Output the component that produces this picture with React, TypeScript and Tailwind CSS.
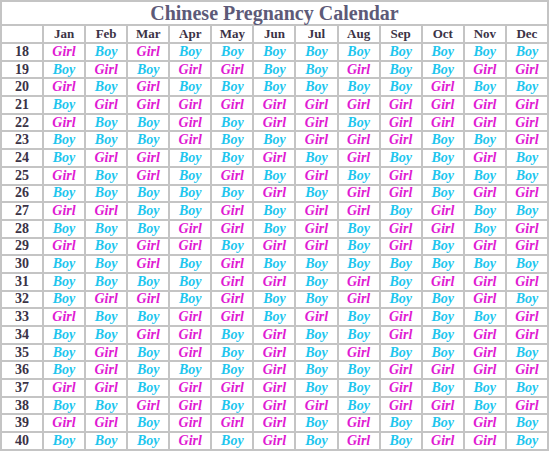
import React from 'react';

const months = ['Jan', 'Feb', 'Mar', 'Apr', 'May', 'Jun', 'Jul', 'Aug', 'Sep', 'Oct', 'Nov', 'Dec'];

// G = Girl, B = Boy, one string per age, Jan..Dec
const chart: [number, string][] = [
  [18, 'GBGBBBBBBBBB'],
  [19, 'BGBGGBBGBBGG'],
  [20, 'GBGBBBBBBGBB'],
  [21, 'BGGGGGGGGGGG'],
  [22, 'GBBGBGGBGGGG'],
  [23, 'BBBGBBGGGBBG'],
  [24, 'BGGBBGBGBBGB'],
  [25, 'GBGBGBGBGBBB'],
  [26, 'BBBBBGBGGBGG'],
  [27, 'GGBBGBGGBGBB'],
  [28, 'BBBGGBGBGGBG'],
  [29, 'GBGGBGGBGBGG'],
  [30, 'BBGBGBBBBBBB'],
  [31, 'BBBBGGBGBGGG'],
  [32, 'BGGBGBBGBBGB'],
  [33, 'GBBGGBGBGBBG'],
  [34, 'BBGGBGBBGBGG'],
  [35, 'BGBGBGBGBBGB'],
  [36, 'BGBBBGBBGGGG'],
  [37, 'GGBGGGBBGBBB'],
  [38, 'BBGGBGGBGGBG'],
  [39, 'GGBGGGBGBBGB'],
  [40, 'BBBGBGBGBGGB'],
];

const App: React.FC = () => {
  return (
    <div className="w-[549px] h-[451px] bg-white overflow-hidden font-['Liberation_Serif',serif]">
      <table className="w-[549px] table-fixed border-collapse border-2 border-[#c4c4c4]">
        <colgroup>
          <col className="w-[42px]" />
          {months.map((m) => (
            <col key={m} />
          ))}
        </colgroup>
        <thead>
          <tr className="h-[24px]">
            <th
              colSpan={13}
              className="border-2 border-[#c4c4c4] p-0 text-center text-[20px] leading-[22px] font-bold text-[#5d5a78]"
            >
              Chinese Pregnancy Calendar
            </th>
          </tr>
          <tr className="h-[18px]">
            <th className="border-2 border-[#c4c4c4] p-0"></th>
            {months.map((m) => (
              <th
                key={m}
                className="border-2 border-[#c4c4c4] p-0 text-center text-[13px] leading-[14px] font-bold text-[#3b3346]"
              >
                {m}
              </th>
            ))}
          </tr>
        </thead>
        <tbody>
          {chart.map(([age, row]) => (
            <tr key={age} className="h-[17.7px]">
              <td className="border-2 border-[#c4c4c4] p-0 text-center text-[14px] leading-[14px] font-bold text-[#3b3346]">
                {age}
              </td>
              {row.split('').map((c, i) => (
                <td
                  key={i}
                  className={
                    c === 'G'
                      ? 'border-2 border-[#c4c4c4] p-0 text-center text-[14px] leading-[14px] font-bold italic text-[#e01ad2]'
                      : 'border-2 border-[#c4c4c4] p-0 text-center text-[14px] leading-[14px] font-bold italic text-[#1ec6ee]'
                  }
                >
                  {c === 'G' ? 'Girl' : 'Boy'}
                </td>
              ))}
            </tr>
          ))}
        </tbody>
      </table>
    </div>
  );
};

export default App;
